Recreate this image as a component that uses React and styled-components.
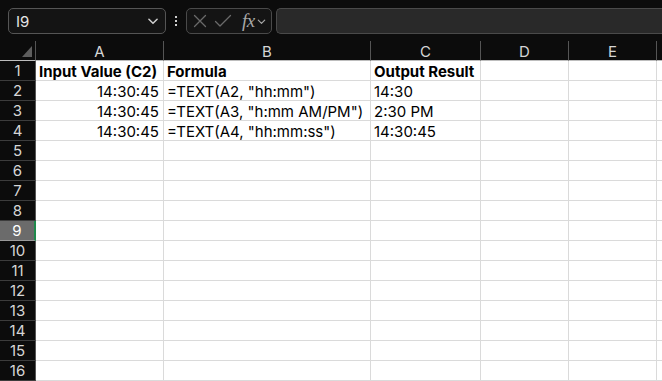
import React from 'react'
import styled, { createGlobalStyle } from 'styled-components'

const GlobalStyle = createGlobalStyle`
    html, body {
        margin: 0;
        padding: 0;
        background: #0c0c0c;
        overflow: hidden;
    }
    * { box-sizing: border-box; }
`

const COLS = [
    { name: 'A', width: 128 },
    { name: 'B', width: 207 },
    { name: 'C', width: 110 },
    { name: 'D', width: 88 },
    { name: 'E', width: 88 },
    { name: '', width: 88 },
]

const DATA = [
    [{ v: 'Input Value (C2)', bold: true }, { v: 'Formula', bold: true }, { v: 'Output Result', bold: true }],
    [{ v: '14:30:45', right: true }, { v: '=TEXT(A2, "hh:mm")' }, { v: '14:30' }],
    [{ v: '14:30:45', right: true }, { v: '=TEXT(A3, "h:mm AM/PM")' }, { v: '2:30 PM' }],
    [{ v: '14:30:45', right: true }, { v: '=TEXT(A4, "hh:mm:ss")' }, { v: '14:30:45' }],
]

const SELECTED_ROW = 9

const Page = styled.div`
    width: 662px;
    height: 381px;
    background: #0c0c0c;
    font-family: Inter, "Liberation Sans", Arial, sans-serif;
    display: flex;
    flex-direction: column;
    overflow: hidden;
`

const Toolbar = styled.div`
    height: 41px;
    display: flex;
    align-items: flex-start;
    padding: 8px 0 0 8px;
    background: #0c0c0c;
`

const NameBox = styled.div`
    width: 158px;
    height: 26px;
    border: 1px solid #555;
    border-radius: 5px;
    background: #141414;
    display: flex;
    align-items: center;
    justify-content: space-between;
    padding: 0 5px 0 7px;
    color: #e6e6e6;
    font-size: 15px;
`

const Dots = styled.div`
    width: 20px;
    height: 26px;
    display: flex;
    flex-direction: column;
    align-items: center;
    justify-content: center;
    gap: 2px;
    span {
        width: 2px;
        height: 2px;
        background: #cfcfcf;
    }
`

const FxBox = styled.div`
    width: 86px;
    height: 26px;
    border: 1px solid #4a4a4a;
    border-radius: 5px;
    background: #141414;
    display: flex;
    align-items: center;
    padding: 0 3px 0 5px;
    gap: 6px;
`

const FxLabel = styled.span`
    font-family: "Liberation Serif", "DejaVu Serif", serif;
    font-style: italic;
    font-size: 19px;
    line-height: 1;
    color: #a8a8a8;
    margin-left: 4px;
    margin-right: -5px;
    letter-spacing: -0.5px;
    padding-bottom: 2px;
`

const FormulaInput = styled.div`
    flex: 1;
    height: 26px;
    margin-left: 4px;
    border: 1px solid #4a4a4a;
    border-right: none;
    border-radius: 5px 0 0 5px;
    background: #292929;
`

const Grid = styled.div`
    display: grid;
    grid-template-columns: 36px ${COLS.map(c => `${c.width}px`).join(' ')};
    grid-auto-rows: 20px;
`

const Corner = styled.div`
    background: #0c0c0c;
    border-right: 1px solid #555;
    border-bottom: 1px solid #bdbdbd;
    position: relative;
    &::after {
        content: '';
        position: absolute;
        right: 3px;
        bottom: 3px;
        width: 0;
        height: 0;
        border-left: 10px solid transparent;
        border-bottom: 11px solid #5e5e5e;
    }
`

const ColHeader = styled.div`
    background: #0c0c0c;
    color: #d6d6d6;
    font-size: 15px;
    display: flex;
    align-items: center;
    justify-content: center;
    border-right: 1px solid #555;
    border-bottom: 1px solid #bdbdbd;
    padding-top: 1px;
`

const RowHeader = styled.div`
    background: ${p => (p.$selected ? '#6b6b6b' : '#0c0c0c')};
    color: ${p => (p.$selected ? '#ffffff' : '#d6d6d6')};
    font-size: 15px;
    display: flex;
    align-items: center;
    justify-content: center;
    border-bottom: 1px solid ${p => (p.$selected ? '#9a9a9a' : '#3c3c3c')};
    border-right: ${p => (p.$selected ? '2px solid #1f8a4c' : '1px solid #555')};
`

const Cell = styled.div`
    background: #ffffff;
    color: #000;
    font-size: 15px;
    font-weight: ${p => (p.$bold ? 700 : 400)};
    display: flex;
    align-items: center;
    justify-content: ${p => (p.$right ? 'flex-end' : 'flex-start')};
    padding: 1px 4px 0 3px;
    border-right: 1px solid #dadada;
    border-bottom: 1px solid #dadada;
    white-space: nowrap;
    overflow: hidden;
`

const Chevron = ({ size = 12, color = '#cfcfcf' }) => (
    <svg width={size} height={size} viewBox="0 0 12 12" fill="none">
        <path d="M2.5 4.5 L6 8 L9.5 4.5" stroke={color} strokeWidth="1.3" strokeLinecap="round" strokeLinejoin="round" />
    </svg>
)

const Cross = () => (
    <svg width="16" height="16" viewBox="0 0 16 16" fill="none">
        <path d="M2.5 2.5 L13.5 13.5 M13.5 2.5 L2.5 13.5" stroke="#6a6a6a" strokeWidth="1.3" strokeLinecap="round" />
    </svg>
)

const Check = () => (
    <svg width="18" height="16" viewBox="0 0 18 16" fill="none">
        <path d="M1.5 8.5 L6 13 L16.5 2.5" stroke="#6a6a6a" strokeWidth="1.3" strokeLinecap="round" strokeLinejoin="round" />
    </svg>
)

const App = () => {
    const rows = Array.from({ length: 16 }, (_, i) => i + 1)
    return (
        <Page>
            <GlobalStyle />
            <Toolbar>
                <NameBox>
                    <span>I9</span>
                    <Chevron size={14} />
                </NameBox>
                <Dots><span /><span /><span /></Dots>
                <FxBox>
                    <Cross />
                    <Check />
                    <FxLabel>fx</FxLabel>
                    <Chevron size={11} color="#a8a8a8" />
                </FxBox>
                <FormulaInput />
            </Toolbar>
            <Grid>
                <Corner />
                {COLS.map((c, i) => <ColHeader key={i}>{c.name}</ColHeader>)}
                {rows.map(r => (
                    <React.Fragment key={r}>
                        <RowHeader $selected={r === SELECTED_ROW}>{r}</RowHeader>
                        {COLS.map((c, ci) => {
                            const d = DATA[r - 1] && DATA[r - 1][ci]
                            return (
                                <Cell key={ci} $bold={d && d.bold} $right={d && d.right}>
                                    {d ? d.v : ''}
                                </Cell>
                            )
                        })}
                    </React.Fragment>
                ))}
            </Grid>
        </Page>
    )
}

export default App
